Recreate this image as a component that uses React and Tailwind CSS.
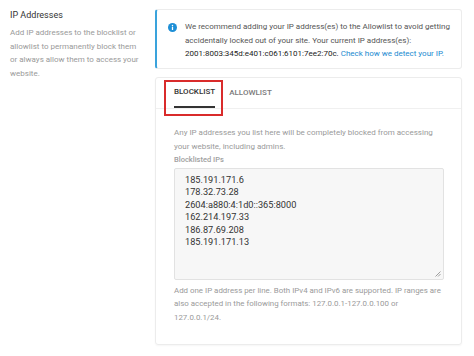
const ips = [
  "185.191.171.6",
  "178.32.73.28",
  "2604:a880:4:1d0::365:8000",
  "162.214.197.33",
  "186.87.69.208",
  "185.191.171.13",
];

function InfoIcon() {
  return (
    <svg width="9" height="9" viewBox="0 0 20 20" className="shrink-0 mt-[2.5px]">
      <circle cx="10" cy="10" r="10" fill="#1e8fd6" />
      <rect x="8.6" y="8.5" width="2.8" height="7" rx="0.6" fill="#fff" />
      <circle cx="10" cy="5.4" r="1.6" fill="#fff" />
    </svg>
  );
}

export default function App() {
  return (
    <div className="w-[474px] h-[356px] bg-white flex font-['Roboto',sans-serif] overflow-hidden">
      <div className="w-[155px] shrink-0 pl-[10px] pr-[14px] pt-[9px]">
        <h2 className="text-[9px] leading-[12px] text-[#333]">IP Addresses</h2>
        <p className="mt-[5px] text-[8px] leading-[13.5px] text-[#9a9a9a]">
          Add IP addresses to the blocklist or allowlist to permanently block them or always allow them to access your website.
        </p>
      </div>

      <div className="w-[307px] shrink-0 pt-[9px]">
        <div className="flex gap-[8px] rounded-[3px] border border-[#ececec] border-l-2 border-l-[#3aa3dc] pl-[11px] pr-[8px] pt-[10px] pb-[7px]">
          <InfoIcon />
          <p className="text-[8px] leading-[13.5px] text-[#555]">
            We recommend adding your IP address(es) to the Allowlist to avoid getting accidentally locked out of your site. Your current IP address(es):{" "}
            <span className="text-[#222]">2001:8003:345d:e401:c061:6101:7ee2:70c.</span>{" "}
            <a className="text-[#1a8ad0]">Check how we detect your IP.</a>
          </p>
        </div>

        <div className="relative mt-[8px] h-[268px] rounded-[3px] border border-[#ececec] shadow-[0_1px_2px_rgba(0,0,0,0.04)]">
          <div className="flex gap-[14px] px-[18px] h-[31px] border-b border-[#f0f0f0]">
            <div className="flex flex-col justify-end">
              <span className="text-[8px] font-medium text-[#333] leading-[10px] mb-[9px]">BLOCKLIST</span>
              <div className="h-[1.5px] bg-[#333]" />
            </div>
            <div className="flex items-center">
              <span className="text-[8px] font-medium text-[#7a7a7a] leading-[10px]">ALLOWLIST</span>
            </div>
          </div>
          <div className="absolute left-[8px] top-[2px] w-[59px] h-[36px] border-2 border-[#d92b2b]" />

          <div className="px-[18px] pt-[17px]">
            <p className="text-[8px] leading-[14px] text-[#9a9a9a]">
              Any IP addresses you list here will be completely blocked from accessing your website, including admins.
            </p>
            <div className="mt-[1px] text-[7.5px] leading-[10px] font-medium text-[#a0a0a0]">Blocklisted IPs</div>
            <div className="relative mt-[3px] w-[270px] h-[112px] rounded-[2px] border border-[#e2e2e2] bg-[#f7f7f7] pl-[10px] pt-[5px]">
              {ips.map((ip) => (
                <div key={ip} className="text-[9.2px] leading-[12.5px] text-[#333]">{ip}</div>
              ))}
              <svg width="6" height="6" viewBox="0 0 6 6" className="absolute right-[2px] bottom-[2px]">
                <path d="M5.5 0.5 L0.5 5.5 M5.5 3 L3 5.5" stroke="#888" strokeWidth="0.8" />
              </svg>
            </div>
            <p className="mt-[4px] w-[270px] text-[7.9px] leading-[13.5px] text-[#9a9a9a]">
              Add one IP address per line. Both IPv4 and IPv6 are supported. IP ranges are also accepted in the following formats: 127.0.0.1-127.0.0.100 or 127.0.0.1/24.
            </p>
          </div>
        </div>
      </div>
    </div>
  );
}
